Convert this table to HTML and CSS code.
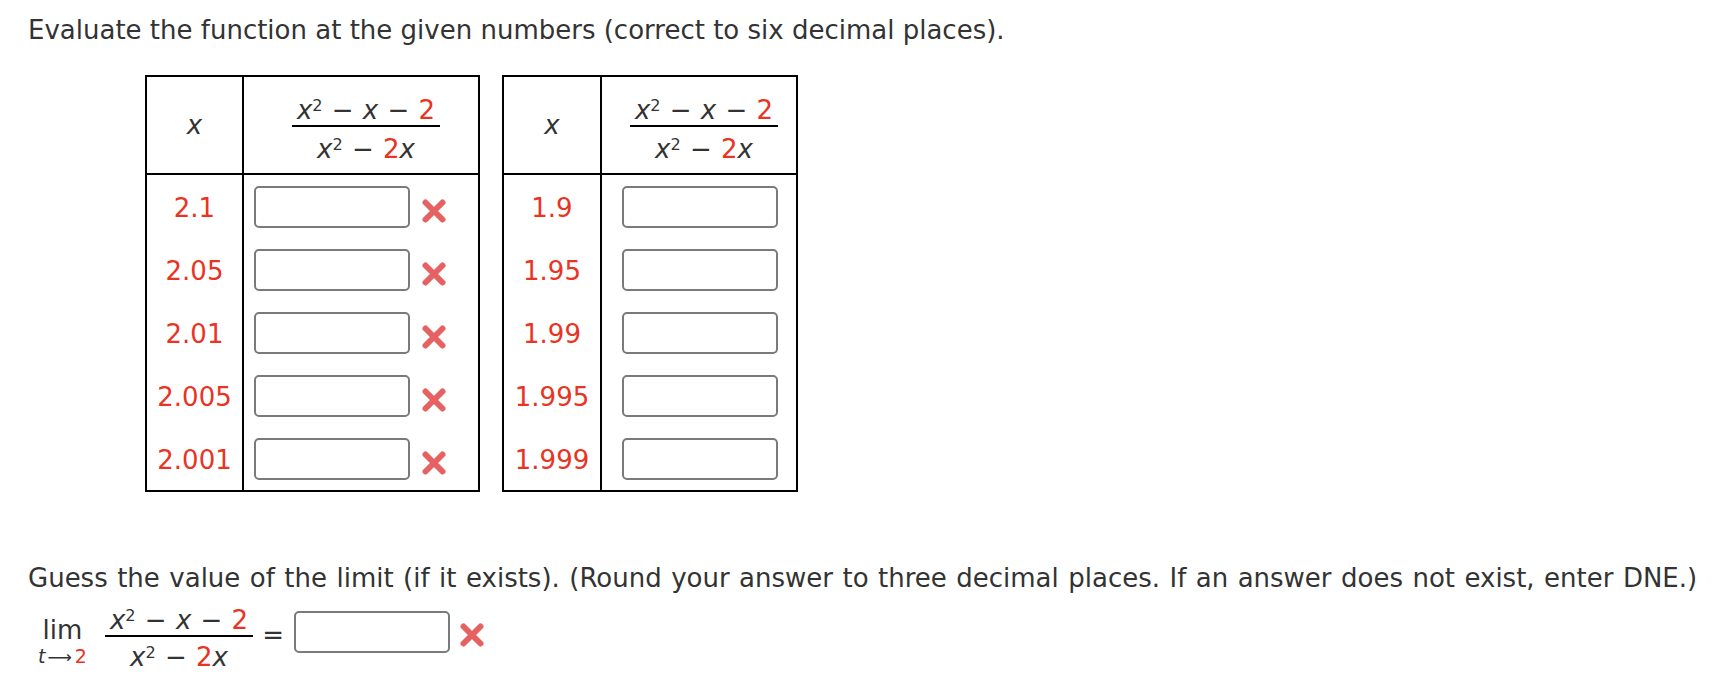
FILE: index.html
```html
<!DOCTYPE html>
<html lang="en">
<head>
<meta charset="utf-8">
<title>Evaluate the function</title>
<link rel="stylesheet" href="styles.css">
</head>
<body>
<p class="prompt">Evaluate the function at the given numbers (correct to six decimal places).</p>

<div class="tables">
  <table class="eval eval-a">
    <thead>
      <tr>
        <th class="xcol"><i class="var">x</i></th>
        <th class="fcol">
          <span class="frac">
            <span class="frac-num"><i class="var">x</i><sup>2</sup> − <i class="var">x</i> − <span class="red">2</span></span>
            <span class="frac-den"><i class="var">x</i><sup>2</sup> − <span class="red">2</span><i class="var">x</i></span>
          </span>
        </th>
      </tr>
    </thead>
    <tbody>
      <tr><td class="xcol red">2.1</td><td class="fcol"><div class="answer"><input class="box" type="text"><svg class="wrong" viewBox="0 0 26 26" width="26" height="26"><path d="M4.5 4.5 L21.5 21.5 M21.5 4.5 L4.5 21.5"/></svg></div></td></tr>
      <tr><td class="xcol red">2.05</td><td class="fcol"><div class="answer"><input class="box" type="text"><svg class="wrong" viewBox="0 0 26 26" width="26" height="26"><path d="M4.5 4.5 L21.5 21.5 M21.5 4.5 L4.5 21.5"/></svg></div></td></tr>
      <tr><td class="xcol red">2.01</td><td class="fcol"><div class="answer"><input class="box" type="text"><svg class="wrong" viewBox="0 0 26 26" width="26" height="26"><path d="M4.5 4.5 L21.5 21.5 M21.5 4.5 L4.5 21.5"/></svg></div></td></tr>
      <tr><td class="xcol red">2.005</td><td class="fcol"><div class="answer"><input class="box" type="text"><svg class="wrong" viewBox="0 0 26 26" width="26" height="26"><path d="M4.5 4.5 L21.5 21.5 M21.5 4.5 L4.5 21.5"/></svg></div></td></tr>
      <tr><td class="xcol red">2.001</td><td class="fcol"><div class="answer"><input class="box" type="text"><svg class="wrong" viewBox="0 0 26 26" width="26" height="26"><path d="M4.5 4.5 L21.5 21.5 M21.5 4.5 L4.5 21.5"/></svg></div></td></tr>
    </tbody>
  </table>

  <table class="eval eval-b">
    <thead>
      <tr>
        <th class="xcol"><i class="var">x</i></th>
        <th class="fcol">
          <span class="frac">
            <span class="frac-num"><i class="var">x</i><sup>2</sup> − <i class="var">x</i> − <span class="red">2</span></span>
            <span class="frac-den"><i class="var">x</i><sup>2</sup> − <span class="red">2</span><i class="var">x</i></span>
          </span>
        </th>
      </tr>
    </thead>
    <tbody>
      <tr><td class="xcol red">1.9</td><td class="fcol"><div class="answer"><input class="box" type="text"></div></td></tr>
      <tr><td class="xcol red">1.95</td><td class="fcol"><div class="answer"><input class="box" type="text"></div></td></tr>
      <tr><td class="xcol red">1.99</td><td class="fcol"><div class="answer"><input class="box" type="text"></div></td></tr>
      <tr><td class="xcol red">1.995</td><td class="fcol"><div class="answer"><input class="box" type="text"></div></td></tr>
      <tr><td class="xcol red">1.999</td><td class="fcol"><div class="answer"><input class="box" type="text"></div></td></tr>
    </tbody>
  </table>
</div>

<p class="guess">Guess the value of the limit (if it exists). (Round your answer to three decimal places. If an answer does not exist, enter DNE.)</p>

<div class="limit">
  <span class="lim">
    <span class="lim-word">lim</span>
    <span class="lim-sub"><i class="var">t</i><span class="arrow">⟶</span><span class="red">2</span></span>
  </span>
  <span class="frac frac-lim">
    <span class="frac-num"><i class="var">x</i><sup>2</sup> − <i class="var">x</i> − <span class="red">2</span></span>
    <span class="frac-den"><i class="var">x</i><sup>2</sup> − <span class="red">2</span><i class="var">x</i></span>
  </span>
  <span class="equals">=</span>
  <input class="box limit-box" type="text">
  <svg class="wrong limit-wrong" viewBox="0 0 26 26" width="26" height="26"><path d="M4.5 4.5 L21.5 21.5 M21.5 4.5 L4.5 21.5"/></svg>
</div>
</body>
</html>
```

FILE: styles.css
```css
* {
  box-sizing: border-box;
}

html, body {
  background: #ffffff;
}

body {
  margin: 0;
  padding: 15px 0 0 28px;
  font-family: "DejaVu Sans", Verdana, sans-serif;
  font-size: 26px;
  line-height: 30px;
  color: #333333;
}

.prompt {
  margin: 0;
}

.red {
  color: #ea3323;
}

.var {
  font-style: italic;
}

sup {
  font-size: 0.62em;
  line-height: 0;
  vertical-align: 8px;
}

/* tables */
.tables {
  display: flex;
  align-items: flex-start;
  gap: 22px;
  margin: 30px 0 0 117px;
}

.eval {
  border-collapse: separate;
  border-spacing: 0;
  border-left: 2px solid #000;
  border-top: 2px solid #000;
  table-layout: fixed;
}

.eval-a { width: 335px; }
.eval-b { width: 296px; }

.eval th,
.eval td {
  padding: 0;
  border-right: 2px solid #000;
  text-align: center;
  vertical-align: middle;
  font-weight: normal;
}

.eval th {
  height: 98px;
  border-bottom: 2px solid #000;
}

.eval th.fcol {
  padding-left: 10px;
}

.eval td {
  height: 63px;
}

.eval td.xcol {
  padding-top: 2px;
}

.eval tbody tr:last-child td {
  height: 65px;
  border-bottom: 2px solid #000;
}

.eval-a .xcol { width: 97px; }
.eval-a .fcol { width: 236px; }
.eval-b .xcol { width: 98px; }
.eval-b .fcol { width: 196px; }

.answer {
  display: flex;
  align-items: center;
}

.eval-a .answer {
  padding-left: 10px;
  gap: 11px;
}

.eval-b .answer {
  padding-left: 20px;
}

.box {
  display: block;
  width: 156px;
  height: 42px;
  margin: 0;
  padding: 0 6px;
  border: 2px solid #7a7a7a;
  border-radius: 5px;
  background: #fff;
  font: inherit;
  outline: none;
}

.wrong {
  display: block;
  flex: none;
  margin-top: 8px;
}

.wrong path {
  fill: none;
  stroke: #e66262;
  stroke-width: 6;
  stroke-linecap: round;
}

/* fraction */
.frac {
  display: inline-flex;
  flex-direction: column;
  align-items: center;
  vertical-align: middle;
  padding-top: 8px;
  white-space: nowrap;
  word-spacing: 1px;
}

.frac-num {
  display: block;
  padding: 0 5px;
  border-bottom: 2px solid #000;
}

.frac-den {
  display: block;
  padding-top: 7px;
}

/* bottom */
.guess {
  margin: 71px 0 0;
  word-spacing: 1.2px;
}

.limit {
  display: flex;
  align-items: flex-start;
  margin: 12px 0 0 10px;
}

.lim {
  display: flex;
  flex-direction: column;
  align-items: center;
  margin-top: 13px;
}

.lim-word {
  line-height: 24px;
}

.lim-sub {
  font-size: 19px;
  line-height: 22px;
  padding-top: 3px;
  white-space: nowrap;
}

.arrow {
  font-size: 17px;
  margin: 0 3px 0 2px;
}

.frac-lim {
  padding-top: 0;
  margin-left: 18px;
}

.frac-lim .frac-den {
  padding-top: 5px;
}

.equals {
  margin: 15px 0 0 9px;
}

.limit-box {
  margin: 6px 0 0 10px;
}

.limit-wrong {
  margin: 17px 0 0 9px;
}
```
